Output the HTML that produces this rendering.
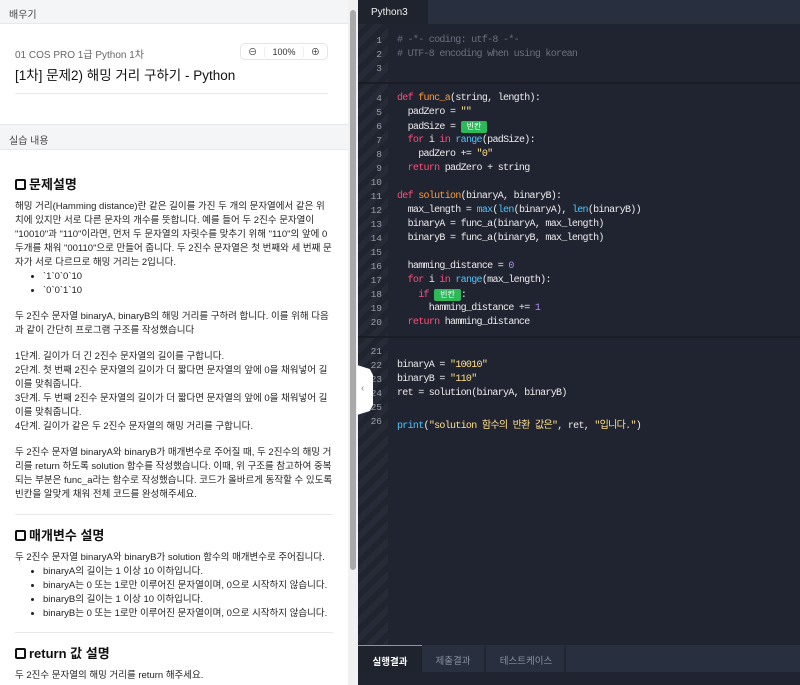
<!DOCTYPE html>
<html><head><meta charset="utf-8"><style>
*{margin:0;padding:0;box-sizing:border-box}
body{width:800px;height:685px;overflow:hidden;position:relative;font-family:"Liberation Sans","Noto Sans CJK KR",sans-serif;background:#fff}
#left{position:absolute;left:0;top:0;width:348px;height:685px;background:#fff;overflow:hidden}
.bar{height:24px;background:#f4f5f7;border-bottom:1px solid #e6e8eb;font-size:10px;color:#444;padding:6px 9px}
.sub{position:absolute;left:15px;top:46px;font-size:10px;color:#666}
.title{position:absolute;left:15px;top:64px;font-size:13.5px;color:#111}
.zoom{position:absolute;left:240px;top:43px;width:88px;height:17px;border:1px solid #e3e5e8;border-radius:5px;font-size:9px;color:#333;display:flex;align-items:center}
.zoom span{flex:1;text-align:center}
.hr{position:absolute;left:15px;width:313px;height:1px;background:#e8e9eb}
.content{position:absolute;left:15px;top:150px;width:318px;font-size:9.5px;line-height:14px;color:#222}
h3{font-size:13px;font-weight:bold;margin:26px 0 6px;color:#111;line-height:18px}
.box{display:inline-block;width:11px;height:11px;border:2px solid #111;border-radius:2px;vertical-align:-1px;margin-right:3px}
ul{padding-left:28px}
.sp{height:12px}
#sb{position:absolute;left:348px;top:0;width:10px;height:685px;background:#f1f1f1}
#sb div{position:absolute;left:2px;top:10px;width:6px;height:560px;background:#a9a9a9;border-radius:3px}
#ed{position:absolute;left:358px;top:0;width:442px;height:685px;background:#202430}
.tabs{height:24px;background:#283040;position:relative}
.tabs .t{position:absolute;left:0;top:0;width:70px;height:24px;background:#1f232e;color:#eee;font-size:10px;padding:7px 0 0 13px}
.gut{position:absolute;left:0;top:24px;width:30px;height:621px;background:repeating-linear-gradient(135deg,#262b37 0 6px,#20242f 6px 12px)}
.code{position:absolute;left:0;top:24px;width:442px;font-family:"Liberation Mono","Noto Sans CJK KR",monospace;font-size:10px;letter-spacing:-0.7px;color:#ececec}
.ln{position:absolute;left:0;width:24px;text-align:right;color:#9aa0ab;letter-spacing:0;font-size:9.5px}
.cl{position:absolute;left:39px;white-space:pre}
.sep{position:absolute;left:0;width:442px;height:2px;background:#1a1d26}
.c{color:#6a7080}.k{color:#ff4d7a}.f{color:#ff9a3c}.s{color:#ffe08a}.b{color:#4ec4ff}.n{color:#b28cff}
.blank{display:inline-block;background:#2fb85a;color:#fff;font-size:8px;padding:0 6px;border-radius:2px;line-height:12px;letter-spacing:0;font-family:"Noto Sans CJK KR",sans-serif}
.btabs{position:absolute;left:0;top:645px;width:442px;height:27px;background:#283040;font-size:9.5px;color:#8990a0}
.btabs div{position:absolute;top:0;height:27px;padding-top:8px;text-align:center}
.toggle{position:absolute;left:357px;top:365px;width:16px;height:50px;background:#fff;clip-path:polygon(0 0,80% 8%,100% 20%,100% 80%,80% 92%,0 100%);font-size:10px;color:#888;padding:18px 0 0 4px}
</style></head><body>
<div id="left">
<div class="bar">배우기</div>
<div class="sub">01 COS PRO 1급 Python 1차</div>
<div class="zoom"><span>⊖</span><span style="flex:1.6;border-left:1px solid #eee;border-right:1px solid #eee">100%</span><span>⊕</span></div>
<div class="title">[1차] 문제2) 해밍 거리 구하기 - Python</div>
<div class="hr" style="top:93px"></div>
<div class="bar" style="position:absolute;top:124px;width:348px;height:26px;border-top:1px solid #e6e8eb;padding-top:7px">실습 내용</div>
<div class="content">
<h3><span class="box"></span>문제설명</h3>
해밍 거리(Hamming distance)란 같은 길이를 가진 두 개의 문자열에서 같은 위치에 있지만 서로 다른 문자의 개수를 뜻합니다. 예를 들어 두 2진수 문자열이 "10010"과 "110"이라면, 먼저 두 문자열의 자릿수를 맞추기 위해 "110"의 앞에 0 두개를 채워 "00110"으로 만들어 줍니다. 두 2진수 문자열은 첫 번째와 세 번째 문자가 서로 다르므로 해밍 거리는 2입니다.
<ul><li>`1`0`0`10</li><li>`0`0`1`10</li></ul>
<div class="sp"></div>두 2진수 문자열 binaryA, binaryB의 해밍 거리를 구하려 합니다. 이를 위해 다음과 같이 간단히 프로그램 구조를 작성했습니다<div class="sp"></div>
1단계. 길이가 더 긴 2진수 문자열의 길이를 구합니다.<br>2단계. 첫 번째 2진수 문자열의 길이가 더 짧다면 문자열의 앞에 0을 채워넣어 길이를 맞춰줍니다.<br>3단계. 두 번째 2진수 문자열의 길이가 더 짧다면 문자열의 앞에 0을 채워넣어 길이를 맞춰줍니다.<br>4단계. 길이가 같은 두 2진수 문자열의 해밍 거리를 구합니다.<div class="sp"></div>
두 2진수 문자열 binaryA와 binaryB가 매개변수로 주어질 때, 두 2진수의 해밍 거리를 return 하도록 solution 함수를 작성했습니다. 이때, 위 구조를 참고하여 중복되는 부분은 func_a라는 함수로 작성했습니다. 코드가 올바르게 동작할 수 있도록 빈칸을 알맞게 채워 전체 코드를 완성해주세요.
<div style="height:1px;background:#e8e9eb;margin-top:12px"></div>
<h3 style="margin-top:12px"><span class="box"></span>매개변수 설명</h3>
두 2진수 문자열 binaryA와 binaryB가 solution 함수의 매개변수로 주어집니다.
<ul><li>binaryA의 길이는 1 이상 10 이하입니다.</li><li>binaryA는 0 또는 1로만 이루어진 문자열이며, 0으로 시작하지 않습니다.</li><li>binaryB의 길이는 1 이상 10 이하입니다.</li><li>binaryB는 0 또는 1로만 이루어진 문자열이며, 0으로 시작하지 않습니다.</li></ul>
<div style="height:1px;background:#e8e9eb;margin-top:11px"></div>
<h3 style="margin-top:12px"><span class="box"></span>return 값 설명</h3>
두 2진수 문자열의 해밍 거리를 return 해주세요.
</div>
</div>
<div id="sb"><div></div></div>
<div id="ed">
<div class="tabs"><div class="t">Python3</div></div>
<div class="gut"></div>
<div class="code">
<div class="sep" style="top:58px"></div><div class="sep" style="top:312px"></div>
<div class="ln" style="top:11px">1</div><div class="cl c" style="top:11px"># -*- coding: utf-8 -*-</div>
<div class="ln" style="top:25px">2</div><div class="cl c" style="top:25px"># UTF-8 encoding when using korean</div>
<div class="ln" style="top:39px">3</div>
<div class="ln" style="top:69px">4</div><div class="cl" style="top:69px"><span class="k">def</span> <span class="f">func_a</span>(string, length):</div>
<div class="ln" style="top:83px">5</div><div class="cl" style="top:83px">  padZero = <span class="s">""</span></div>
<div class="ln" style="top:97px">6</div><div class="cl" style="top:97px">  padSize = <span class="blank">빈칸</span></div>
<div class="ln" style="top:111px">7</div><div class="cl" style="top:111px">  <span class="k">for</span> i <span class="k">in</span> <span class="b">range</span>(padSize):</div>
<div class="ln" style="top:125px">8</div><div class="cl" style="top:125px">    padZero += <span class="s">"0"</span></div>
<div class="ln" style="top:139px">9</div><div class="cl" style="top:139px">  <span class="k">return</span> padZero + string</div>
<div class="ln" style="top:153px">10</div>
<div class="ln" style="top:167px">11</div><div class="cl" style="top:167px"><span class="k">def</span> <span class="f">solution</span>(binaryA, binaryB):</div>
<div class="ln" style="top:181px">12</div><div class="cl" style="top:181px">  max_length = <span class="b">max</span>(<span class="b">len</span>(binaryA), <span class="b">len</span>(binaryB))</div>
<div class="ln" style="top:195px">13</div><div class="cl" style="top:195px">  binaryA = func_a(binaryA, max_length)</div>
<div class="ln" style="top:209px">14</div><div class="cl" style="top:209px">  binaryB = func_a(binaryB, max_length)</div>
<div class="ln" style="top:223px">15</div>
<div class="ln" style="top:237px">16</div><div class="cl" style="top:237px">  hamming_distance = <span class="n">0</span></div>
<div class="ln" style="top:251px">17</div><div class="cl" style="top:251px">  <span class="k">for</span> i <span class="k">in</span> <span class="b">range</span>(max_length):</div>
<div class="ln" style="top:265px">18</div><div class="cl" style="top:265px">    <span class="k">if</span> <span class="blank">빈칸</span>:</div>
<div class="ln" style="top:279px">19</div><div class="cl" style="top:279px">      hamming_distance += <span class="n">1</span></div>
<div class="ln" style="top:293px">20</div><div class="cl" style="top:293px">  <span class="k">return</span> hamming_distance</div>
<div class="ln" style="top:322px">21</div>
<div class="ln" style="top:336px">22</div><div class="cl" style="top:336px">binaryA = <span class="s">"10010"</span></div>
<div class="ln" style="top:350px">23</div><div class="cl" style="top:350px">binaryB = <span class="s">"110"</span></div>
<div class="ln" style="top:364px">24</div><div class="cl" style="top:364px">ret = solution(binaryA, binaryB)</div>
<div class="ln" style="top:378px">25</div>
<div class="ln" style="top:392px">26</div><div class="cl" style="top:392px"><span class="b">print</span>(<span class="s">"solution 함수의 반환 값은"</span>, ret, <span class="s">"입니다."</span>)</div>
</div>
<div class="btabs">
<div style="left:0;width:64px;background:#1f232e;color:#fff;border-top:1px solid #4ea3ff;font-weight:bold">실행결과</div>
<div style="left:64px;width:64px;border-right:2px solid #222733">제출결과</div>
<div style="left:130px;width:78px;border-right:2px solid #222733">테스트케이스</div>
</div>
</div>
<div class="toggle">‹</div>
</body></html>
